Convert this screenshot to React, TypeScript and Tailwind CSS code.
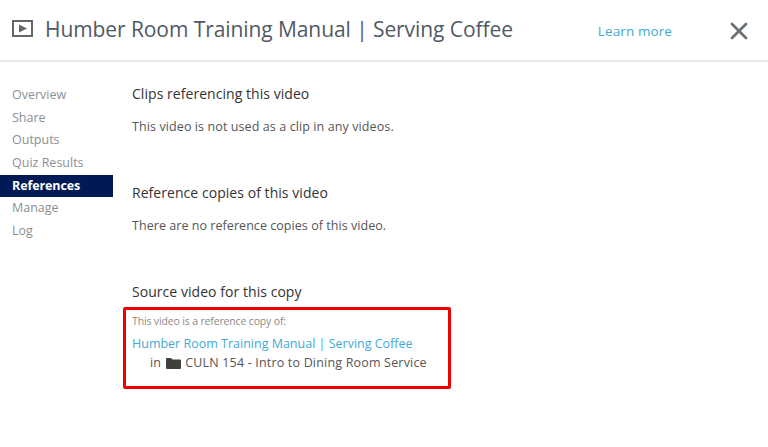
import React from 'react';
import { X } from 'lucide-react';

const navItems = ['Overview', 'Share', 'Outputs', 'Quiz Results', 'References', 'Manage', 'Log'];

const App = () => {
  return (
    <div className="w-[768px] h-[447px] overflow-hidden bg-white font-['Open_Sans',sans-serif]">
      {/* Header */}
      <div className="h-[62px] flex items-center border-b-2 border-[#e8e8e8] pl-3 pr-[15px] pb-[3px]">
        <svg width="21" height="17" viewBox="0 0 21 17" className="shrink-0">
          <rect x="1" y="1" width="19" height="15" fill="none" stroke="#666" strokeWidth="2" />
          <path d="M7 4.5 L15 8.5 L7 12.5 Z" fill="#666" />
        </svg>
        <div className="ml-[12px] text-[21px] leading-[28px] tracking-[-0.08px] text-[#505a64] whitespace-nowrap">
          Humber Room Training Manual | Serving Coffee
        </div>
        <div className="ml-auto mt-[5px] text-[13.5px] tracking-[0.1px] text-[#3fa9d6] whitespace-nowrap">Learn more</div>
        <X className="ml-[53px] mt-[4px] text-[#6b7075]" size={28} strokeWidth={2.4} />
      </div>

      <div className="flex">
        {/* Side nav */}
        <div className="w-[113px] shrink-0 pt-[22px]">
          {navItems.map((item) =>
            item === 'References' ? (
              <div
                key={item}
                className="h-[22.67px] pl-3 flex items-center bg-[#001a56] text-white font-bold text-[12.5px] tracking-[-0.1px]"
              >
                {item}
              </div>
            ) : (
              <div key={item} className="h-[22.67px] pl-3 flex items-center text-[#8b8f93] text-[12.5px]">
                {item}
              </div>
            ),
          )}
        </div>

        {/* Content */}
        <div className="pl-[19px] pt-[21px] text-[#4a4a4a]">
          <h2 className="text-[14px] leading-[22px] text-[#333] tracking-[0.05px]">Clips referencing this video</h2>
          <p className="mt-[12px] text-[12.5px] leading-[20px] tracking-[0.1px] text-[#555]">
            This video is not used as a clip in any videos.
          </p>

          <h2 className="mt-[45px] text-[14px] leading-[22px] text-[#333] tracking-[0.05px]">Reference copies of this video</h2>
          <p className="mt-[12px] text-[12.5px] leading-[20px] tracking-[0.05px] text-[#555]">
            There are no reference copies of this video.
          </p>

          <h2 className="mt-[45px] text-[14px] leading-[22px] text-[#333] tracking-[0.05px]">Source video for this copy</h2>

          <div className="-ml-[9px] mt-[4px] w-[328px] h-[82px] border-[3px] border-[#f00000] rounded-[2px] pl-[6px] pt-[3px]">
            <div className="text-[10.5px] leading-[16px] text-[#8a8a8a] tracking-[-0.15px]">This video is a reference copy of:</div>
            <div className="mt-[5px] text-[12.5px] leading-[20px] text-[#3fa9d6] tracking-[0px] whitespace-nowrap">
              Humber Room Training Manual | Serving Coffee
            </div>
            <div className="-mt-[1px] flex items-center pl-[18px] text-[12.5px] leading-[19px] text-[#555] tracking-[0.18px] whitespace-nowrap">
              <span>in</span>
              <svg width="15" height="12" viewBox="0 0 15 12" className="ml-[5px] mr-[4px]">
                <path d="M0 2 Q0 1 1 1 L5 1 L6.5 2.5 L14 2.5 Q15 2.5 15 3.5 L15 11 Q15 12 14 12 L1 12 Q0 12 0 11 Z" fill="#3f3f3f" />
              </svg>
              <span>CULN 154 - Intro to Dining Room Service</span>
            </div>
          </div>
        </div>
      </div>
    </div>
  );
};

export default App;
